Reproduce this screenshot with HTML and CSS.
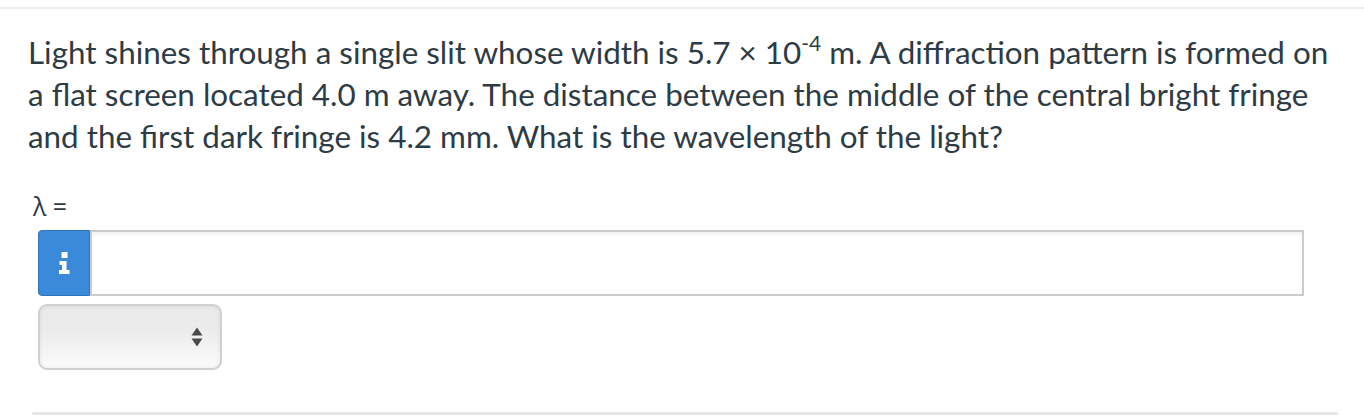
FILE: index.html
```html
<!DOCTYPE html>
<html>
<head>
<meta charset="utf-8">
<link rel="stylesheet" href="styles.css">
</head>
<body>
<div class="page">
  <div class="question">
    <p class="text">Light shines through a single slit whose width is 5.7 × 10<sup>-4</sup> m. A diffraction pattern is formed on a flat screen located 4.0 m away. The distance between the middle of the central bright fringe and the first dark fringe is 4.2 mm. What is the wavelength of the light?</p>
    <div class="label">λ =</div>
    <div class="answer-row">
      <div class="info-btn">
        <svg width="11" height="22" viewBox="0 0 11 22"><path d="M2.5 0h6v6h-6z M0.5 9h7v9h3v4H0v-4h3v-5H0.5z" fill="#fff"/></svg>
      </div>
      <div class="answer-input"></div>
    </div>
    <div class="unit-select">
      <svg class="arrows" width="12" height="22" viewBox="0 0 12 22"><path d="M6 1.5L11.5 9.5H0.5Z M6 20.5L11.5 12.5H0.5Z" fill="#4a4a4a"/></svg>
    </div>
  </div>
  <div class="bottom-rule"></div>
</div>
</body>
</html>
```
FILE: styles.css
```css
html, body {
  margin: 0;
  padding: 0;
  background: #fff;
}
.page {
  border-top: 2px solid #eeeeee;
  margin-top: 7px;
  font-family: Lato, "Open Sans", sans-serif;
  color: #2d3b45;
}
.question {
  padding: 22px 0 0 28px;
}
.text {
  margin: 0;
  width: 1312px;
  font-size: 31.4px;
  line-height: 42px;
}
.text sup {
  font-size: 21px;
  line-height: 0;
  vertical-align: 0;
  position: relative;
  top: -13px;
}
.label {
  margin: 36px 0 0 5px;
  font-size: 25px;
  line-height: 26px;
  font-family: "Open Sans", sans-serif;
}
.answer-row {
  display: flex;
  margin: 11px 0 0 10px;
  height: 66px;
  width: 1266px;
}
.info-btn {
  width: 52px;
  background: #3b89d9;
  border: 1px solid #2f73bb;
  border-radius: 4px 0 0 4px;
  display: flex;
  align-items: center;
  justify-content: center;
  box-sizing: border-box;
}
.answer-input {
  flex: 1;
  border: 2px solid #cccccc;
  box-shadow: inset 0 3px 3px rgba(0,0,0,0.05);
  background: #fff;
}
.unit-select {
  margin: 8px 0 0 10px;
  width: 184px;
  height: 66px;
  box-sizing: border-box;
  border: 2px solid #d0d0d0;
  border-radius: 9px;
  background: linear-gradient(#e9e9e9, #ececec 40%, #fbfbfb);
  box-shadow: inset 0 0 4px rgba(0,0,0,0.08);
  display: flex;
  align-items: center;
  justify-content: flex-end;
  padding-right: 17px;
}
.bottom-rule {
  margin: 42px 26px 0 32px;
  height: 3px;
  background: #e6e6e6;
  border-radius: 2px;
}
```
